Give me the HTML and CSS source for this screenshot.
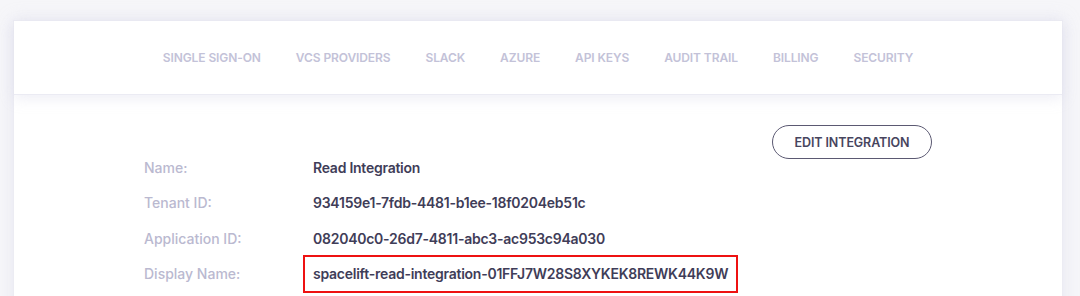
FILE: index.html
```html
<!DOCTYPE html>
<html lang="en">
<head>
    <meta charset="UTF-8">
    <title>Azure integration</title>
    <link rel="stylesheet" href="styles.css">
</head>
<body>
    <div class="page">
        <nav class="tabs">
            <a class="tab">Single sign-on</a>
            <a class="tab">VCS providers</a>
            <a class="tab">Slack</a>
            <a class="tab">Azure</a>
            <a class="tab">API keys</a>
            <a class="tab">Audit trail</a>
            <a class="tab">Billing</a>
            <a class="tab">Security</a>
        </nav>

        <div class="content">
            <div class="details">
                <div class="details-header">
                    <button class="btn-outline">Edit integration</button>
                </div>
                <div class="row">
                    <div class="label">Name:</div>
                    <div class="value">Read Integration</div>
                </div>
                <div class="row">
                    <div class="label">Tenant ID:</div>
                    <div class="value">934159e1-7fdb-4481-b1ee-18f0204eb51c</div>
                </div>
                <div class="row">
                    <div class="label">Application ID:</div>
                    <div class="value">082040c0-26d7-4811-abc3-ac953c94a030</div>
                </div>
                <div class="row">
                    <div class="label">Display Name:</div>
                    <div class="value"><span class="highlight">spacelift-read-integration-01FFJ7W28S8XYKEK8REWK44K9W</span></div>
                </div>
            </div>
        </div>
    </div>
</body>
</html>
```

FILE: styles.css
```css
body {
    margin: 0;
    background-color: #f6f6f9;
    font-family: Inter, "Noto Sans", sans-serif;
    overflow: hidden;
}
.page {
    margin: 20px 17px 0 13px;
    background-color: #ffffff;
    box-shadow: 0 0 16px rgba(200, 200, 225, 0.35);
    border: 1px solid #ececf3;
    border-bottom: none;
}
.tabs {
    position: relative;
    height: 73px;
    display: flex;
    justify-content: center;
    align-items: center;
    gap: 35px;
    background-color: #ffffff;
    border-bottom: 1px solid #ebebf3;
    box-shadow: 0 4px 12px rgba(210, 210, 230, 0.35);
}
.tab {
    font-size: 12px;
    font-weight: 600;
    letter-spacing: -0.1px;
    text-transform: uppercase;
    color: #c3c2d8;
    cursor: pointer;
}
.content {
    padding-top: 30px;
    height: 200px;
}
.details {
    width: 788px;
    margin: 0 auto;
}
.details-header {
    display: flex;
    justify-content: flex-end;
    margin-bottom: -1px;
}
.btn-outline {
    height: 34px;
    width: 160px;
    border: 1px solid #5b5972;
    border-radius: 17px;
    background: #ffffff;
    font-family: inherit;
    font-size: 12.5px;
    font-weight: 600;
    letter-spacing: -0.1px;
    text-transform: uppercase;
    color: #47455e;
}
.row {
    display: flex;
    line-height: 20px;
    margin-bottom: 15.4px;
    font-size: 14px;
}
.label {
    width: 168px;
    color: #bab9d0;
    font-weight: 500;
}
.value {
    padding-left: 1px;
    color: #3f3d58;
    font-weight: 600;
    letter-spacing: -0.25px;
}
.highlight {
    display: inline-block;
    border: 2px solid #ee1111;
    padding: 7px 8px;
    margin: -9px 0 -9px -10px;
}
```
